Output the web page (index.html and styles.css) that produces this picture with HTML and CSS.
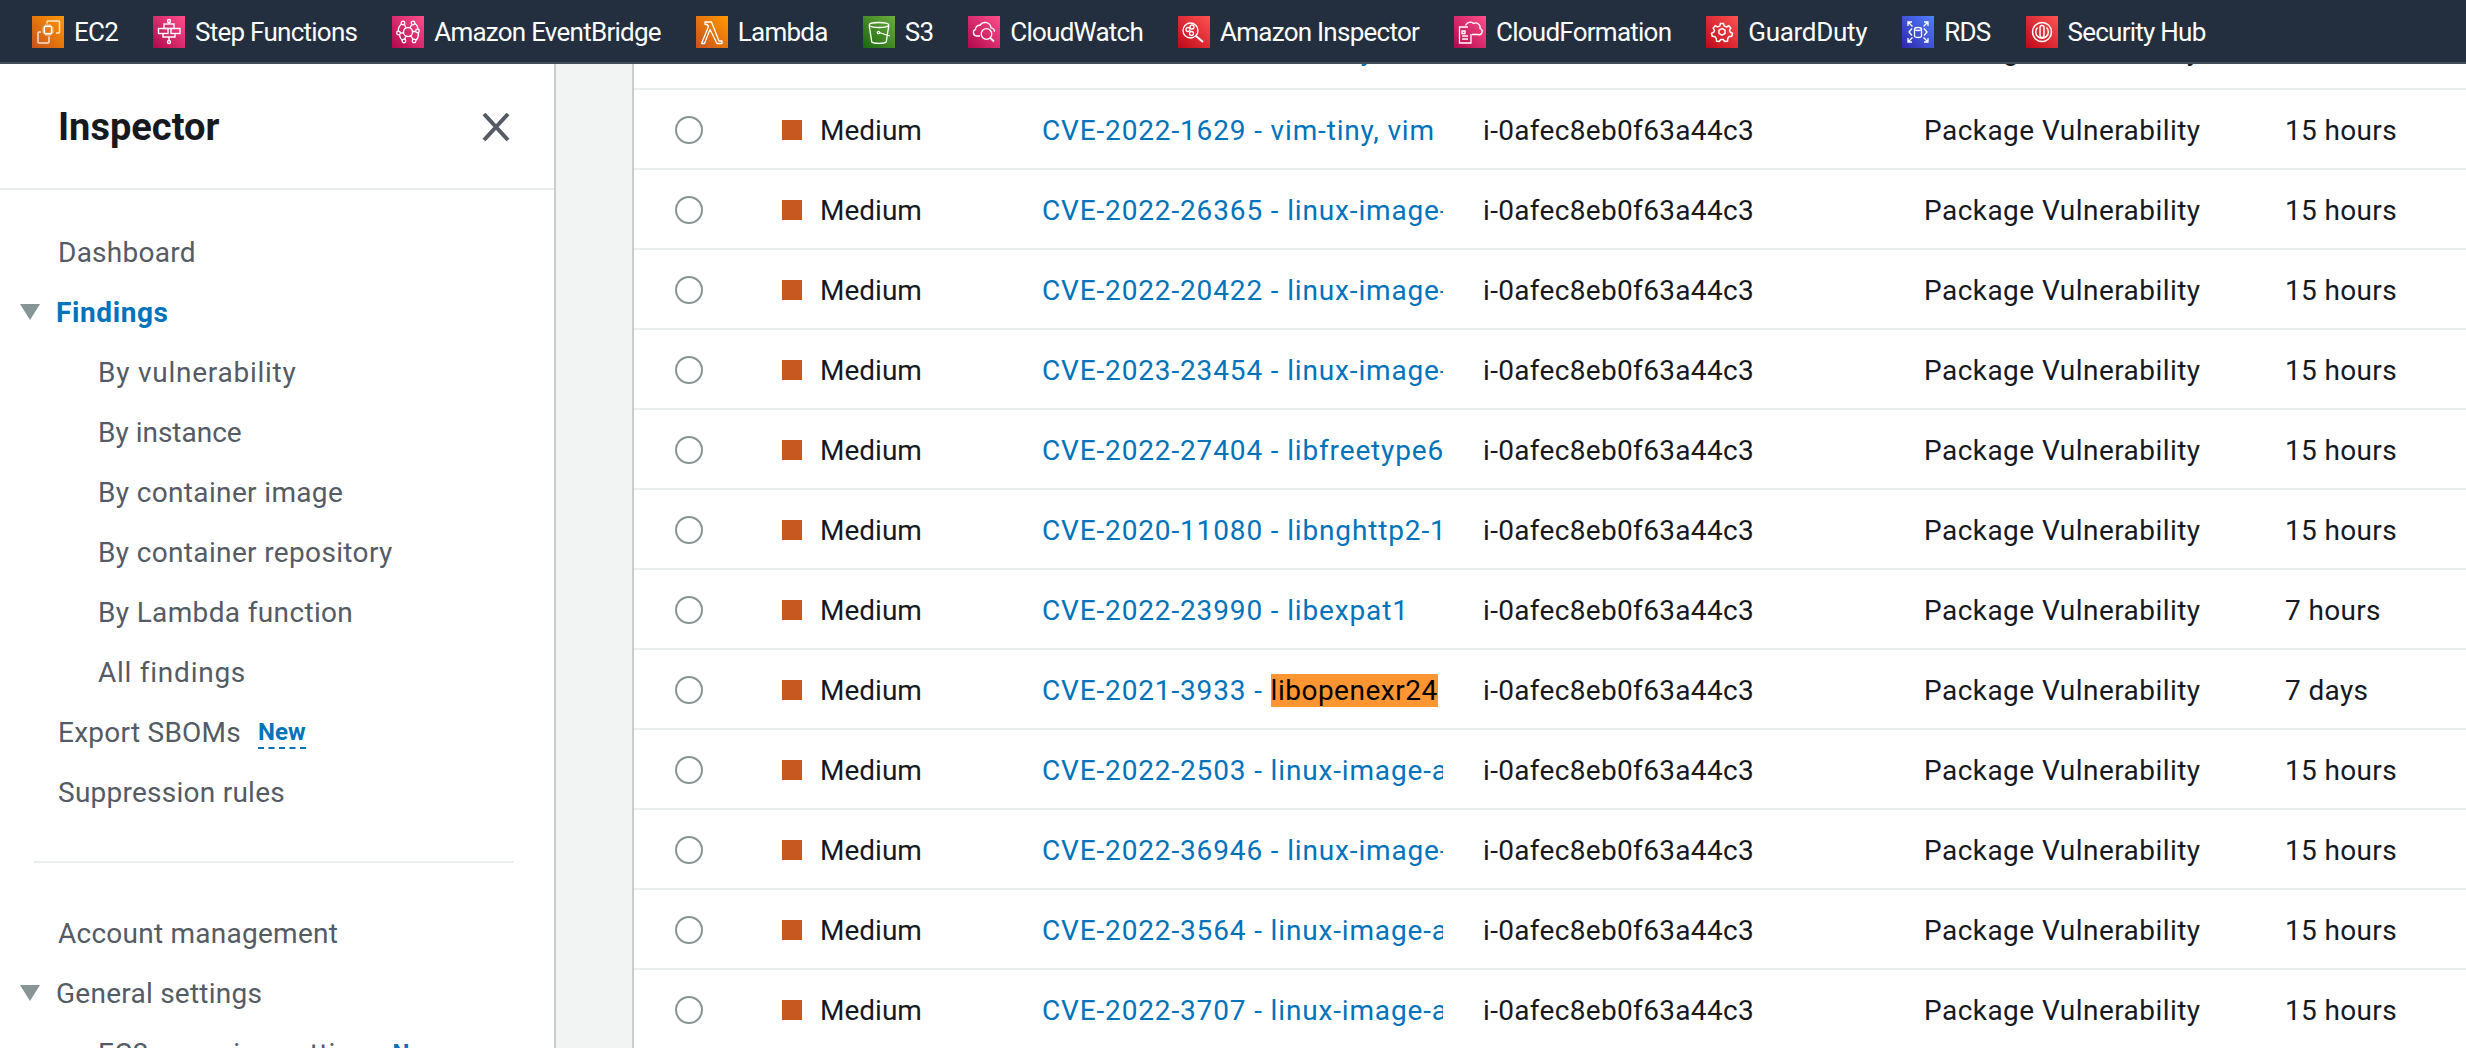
FILE: index.html
```html
<!DOCTYPE html>
<html lang="en">
<head>
<meta charset="utf-8">
<title>Inspector findings</title>
<link rel="stylesheet" href="styles.css">
</head>
<body>
<header class="topbar">
  <a class="svc"><svg class="ico"><defs><linearGradient id="go" x1="0" y1="1" x2="1" y2="0"><stop offset="0" stop-color="#c8511b"/><stop offset="1" stop-color="#ff9900"/></linearGradient></defs><rect width="32" height="32" fill="url(#go)"/><g fill="none" stroke="#fff" stroke-width="1.2"><rect x="12.500" y="10.500" width="7" height="7" stroke-width="1.400"/><path d="M14 8.500v2M16 8.500v2M18 8.500v2M14 17.500v2M16 17.500v2M18 17.500v2M10.500 12h2M10.500 14h2M10.500 16h2M19.500 12h2M19.500 14h2M19.500 16h2"/><path d="M15 7.500V6q0-1 1-1h10.500q1 0 1 1v10q0 1-1 1H24M17 20.500V26q0 1-1 1H7q-1 0-1-1V17q0-1 1-1h2" stroke-opacity=".8" stroke-width="1.500"/></g></svg><span class="svc-name">EC2</span></a>
  <a class="svc"><svg class="ico"><defs><linearGradient id="gp" x1="0" y1="1" x2="1" y2="0"><stop offset="0" stop-color="#b0084d"/><stop offset="1" stop-color="#ff4f8b"/></linearGradient></defs><rect width="32" height="32" fill="url(#gp)"/><g fill="none" stroke="#fff" stroke-width="1.400"><circle cx="16" cy="5" r="1.500"/><path d="M16 6.500V8M16 21v3.500"/><rect x="11" y="8" width="10" height="4.500"/><rect x="5.500" y="12.500" width="9.500" height="5"/><rect x="18" y="12.500" width="9" height="5"/><path d="M10 17.500V21h12v-3.500"/><circle cx="16" cy="26" r="1.500"/></g></svg><span class="svc-name">Step Functions</span></a>
  <a class="svc"><svg class="ico"><rect width="32" height="32" fill="url(#gp)"/><g fill="none" stroke="#fff" stroke-width="1.300"><circle cx="16" cy="16" r="4.500"/><circle cx="11" cy="7" r="1.800"/><circle cx="21" cy="7" r="1.800"/><circle cx="6.500" cy="17" r="1.800"/><circle cx="25.500" cy="15" r="1.800"/><circle cx="12" cy="25" r="1.800"/><circle cx="22" cy="25" r="1.800"/><path d="M12.500 8.500l1.500 3.500M19.800 8.500L18 12M8.300 17h3.200M20.500 15.500h3.200M12.800 23.200l1-3M21 23.200l-2.500-3.500M9.500 8Q6 11 6.300 15.200M22.800 7.500Q26 9.500 25.800 13.200M7.500 18.800Q8 22.500 10.300 24.500M24 24.500q2.500-2.500 2.500-7.500"/></g></svg><span class="svc-name">Amazon EventBridge</span></a>
  <a class="svc"><svg class="ico"><rect width="32" height="32" fill="url(#go)"/><path d="M9 6h6.500l7.500 19h3v2.500h-5L14 13.500 8.500 27.500H5.500l7-17L11 8.500H9z" fill="none" stroke="#fff" stroke-width="1.300" stroke-linejoin="round"/></svg><span class="svc-name">Lambda</span></a>
  <a class="svc"><svg class="ico"><defs><linearGradient id="gg" x1="0" y1="1" x2="1" y2="0"><stop offset="0" stop-color="#1b660f"/><stop offset="1" stop-color="#6cae3e"/></linearGradient></defs><rect width="32" height="32" fill="url(#gg)"/><g fill="none" stroke="#fff" stroke-width="1.300"><ellipse cx="16" cy="9" rx="9.800" ry="2.500"/><path d="M6.200 9.500l2.600 16.500c.4 1.700 14 1.700 14.400 0l2.600-16.500M16 16.500l11 3.500"/><circle cx="15.500" cy="16.500" r="1.200"/></g></svg><span class="svc-name">S3</span></a>
  <a class="svc"><svg class="ico"><rect width="32" height="32" fill="url(#gp)"/><g fill="none" stroke="#fff" stroke-width="1.300"><path d="M12 20H9a3.500 3.500 0 0 1-1.500-6.700 4 4 0 0 1 4.500-4 6 6 0 0 1 11 2.500 4 4 0 0 1 3.500 4"/><circle cx="18.500" cy="18" r="5.300"/><path d="M22.300 21.800l3.700 3.700" stroke-width="1.800"/></g></svg><span class="svc-name">CloudWatch</span></a>
  <a class="svc"><svg class="ico"><defs><linearGradient id="gr" x1="0" y1="1" x2="1" y2="0"><stop offset="0" stop-color="#bd0816"/><stop offset="1" stop-color="#ff5252"/></linearGradient></defs><rect width="32" height="32" fill="url(#gr)"/><g fill="none" stroke="#fff" stroke-width="1.300"><circle cx="12.500" cy="14.500" r="7.500"/><circle cx="14" cy="11" r="2"/><circle cx="10" cy="13.500" r="2"/><circle cx="13.500" cy="17.500" r="2"/><path d="M18 20l7 6" stroke-width="2"/></g></svg><span class="svc-name">Amazon Inspector</span></a>
  <a class="svc"><svg class="ico"><rect width="32" height="32" fill="url(#gp)"/><g fill="none" stroke="#fff" stroke-width="1.300"><path d="M14 11H5.500v16H17V18"/><path d="M8 15h3v2.500H8zM8 20h6M8 23h6"/><path d="M11.500 9.500a5 5 0 0 1 8-2 4.500 4.500 0 0 1 6.500 5 3 3 0 0 1-2 6h-6"/></g></svg><span class="svc-name">CloudFormation</span></a>
  <a class="svc"><svg class="ico"><rect width="32" height="32" fill="url(#gr)"/><g fill="none" stroke="#fff" stroke-width="1.500"><path d="M14.500 7.500h3l.7 2.500 2.300 1 2.300-1.200 2 2.300-1.300 2.400.8 1.800 2.200 1-.8 3-2.500.2-1.500 2-.2 2.500-2.800.5-1.500-2h-2.400l-1.500 2-2.800-.5-.2-2.500-1.500-2-2.500-.2-.8-3 2.200-1 .8-1.800-1.300-2.400 2-2.300 2.300 1.200 2.300-1z"/><path d="M16 12.500l3 1.700v3.300L16 19.200l-3-1.700v-3.300z"/></g></svg><span class="svc-name">GuardDuty</span></a>
  <a class="svc"><svg class="ico"><defs><linearGradient id="gb" x1="0" y1="1" x2="1" y2="0"><stop offset="0" stop-color="#2e27ad"/><stop offset="1" stop-color="#527fff"/></linearGradient></defs><rect width="32" height="32" fill="url(#gb)"/><g fill="none" stroke="#fff" stroke-width="1.300"><ellipse cx="16" cy="13" rx="3.500" ry="1.500"/><path d="M12.500 13v7c0 2 7 2 7 0v-7M10 12.500l-3 3.500 3 3.500M22 12.500l3 3.500-3 3.500M6 10V6h4M6 6l4.500 4.500M26 10V6h-4M26 6l-4.500 4.500M6 22v4h4M6 26l4.500-4.500M26 22v4h-4M26 26l-4.500-4.500"/></g></svg><span class="svc-name">RDS</span></a>
  <a class="svc"><svg class="ico"><rect width="32" height="32" fill="url(#gr)"/><g fill="none" stroke="#fff" stroke-width="1.500"><circle cx="16" cy="16" r="9.500"/><path d="M11.500 11.500a6.300 6.300 0 1 0 9 0"/><rect x="14" y="9.500" width="4" height="12" rx="2"/></g></svg><span class="svc-name">Security Hub</span></a>
</header>
<div class="shell">
  <nav class="side">
    <div class="side-head">
      <h2 class="side-title">Inspector</h2>
      <svg class="close" viewBox="0 0 28 28"><path d="M2 1l24 26M26 1L2 27"/></svg>
    </div>
    <ul class="menu">
      <li class="item">Dashboard</li>
      <li class="item group active"><i class="tri"></i>Findings</li>
      <li class="item sub wide">By vulnerability</li>
      <li class="item sub tight">By instance</li>
      <li class="item sub">By container image</li>
      <li class="item sub">By container repository</li>
      <li class="item sub">By Lambda function</li>
      <li class="item sub wide">All findings</li>
      <li class="item">Export SBOMs<span class="new">New</span></li>
      <li class="item">Suppression rules</li>
    </ul>
    <hr class="side-rule">
    <ul class="menu">
      <li class="item">Account management</li>
      <li class="item group"><i class="tri"></i>General settings</li>
      <li class="item sub">EC2 scanning settings<span class="new">New</span></li>
    </ul>
  </nav>
  <div class="gutter"></div>
  <main class="panel">
    <div class="rows">
      <div class="row"><span class="c-radio"><i class="radio"></i></span><span class="c-sev"><i class="sq"></i>Medium</span><a class="c-title">CVE-2022-1621 - vim-tiny, vim</a><span class="c-inst">i-0afec8eb0f63a44c3</span><span class="c-type">Package Vulnerability</span><span class="c-age">15 hours</span></div>
      <div class="row"><span class="c-radio"><i class="radio"></i></span><span class="c-sev"><i class="sq"></i>Medium</span><a class="c-title">CVE-2022-1629 - vim-tiny, vim</a><span class="c-inst">i-0afec8eb0f63a44c3</span><span class="c-type">Package Vulnerability</span><span class="c-age">15 hours</span></div>
      <div class="row"><span class="c-radio"><i class="radio"></i></span><span class="c-sev"><i class="sq"></i>Medium</span><a class="c-title">CVE-2022-26365 - linux-image-aws</a><span class="c-inst">i-0afec8eb0f63a44c3</span><span class="c-type">Package Vulnerability</span><span class="c-age">15 hours</span></div>
      <div class="row"><span class="c-radio"><i class="radio"></i></span><span class="c-sev"><i class="sq"></i>Medium</span><a class="c-title">CVE-2022-20422 - linux-image-aws</a><span class="c-inst">i-0afec8eb0f63a44c3</span><span class="c-type">Package Vulnerability</span><span class="c-age">15 hours</span></div>
      <div class="row"><span class="c-radio"><i class="radio"></i></span><span class="c-sev"><i class="sq"></i>Medium</span><a class="c-title">CVE-2023-23454 - linux-image-aws</a><span class="c-inst">i-0afec8eb0f63a44c3</span><span class="c-type">Package Vulnerability</span><span class="c-age">15 hours</span></div>
      <div class="row"><span class="c-radio"><i class="radio"></i></span><span class="c-sev"><i class="sq"></i>Medium</span><a class="c-title">CVE-2022-27404 - libfreetype6</a><span class="c-inst">i-0afec8eb0f63a44c3</span><span class="c-type">Package Vulnerability</span><span class="c-age">15 hours</span></div>
      <div class="row"><span class="c-radio"><i class="radio"></i></span><span class="c-sev"><i class="sq"></i>Medium</span><a class="c-title">CVE-2020-11080 - libnghttp2-14</a><span class="c-inst">i-0afec8eb0f63a44c3</span><span class="c-type">Package Vulnerability</span><span class="c-age">15 hours</span></div>
      <div class="row"><span class="c-radio"><i class="radio"></i></span><span class="c-sev"><i class="sq"></i>Medium</span><a class="c-title">CVE-2022-23990 - libexpat1</a><span class="c-inst">i-0afec8eb0f63a44c3</span><span class="c-type">Package Vulnerability</span><span class="c-age">7 hours</span></div>
      <div class="row"><span class="c-radio"><i class="radio"></i></span><span class="c-sev"><i class="sq"></i>Medium</span><a class="c-title">CVE-2021-3933 - <mark class="hit">libopenexr24</mark></a><span class="c-inst">i-0afec8eb0f63a44c3</span><span class="c-type">Package Vulnerability</span><span class="c-age">7 days</span></div>
      <div class="row"><span class="c-radio"><i class="radio"></i></span><span class="c-sev"><i class="sq"></i>Medium</span><a class="c-title">CVE-2022-2503 - linux-image-aws</a><span class="c-inst">i-0afec8eb0f63a44c3</span><span class="c-type">Package Vulnerability</span><span class="c-age">15 hours</span></div>
      <div class="row"><span class="c-radio"><i class="radio"></i></span><span class="c-sev"><i class="sq"></i>Medium</span><a class="c-title">CVE-2022-36946 - linux-image-aws</a><span class="c-inst">i-0afec8eb0f63a44c3</span><span class="c-type">Package Vulnerability</span><span class="c-age">15 hours</span></div>
      <div class="row"><span class="c-radio"><i class="radio"></i></span><span class="c-sev"><i class="sq"></i>Medium</span><a class="c-title">CVE-2022-3564 - linux-image-aws</a><span class="c-inst">i-0afec8eb0f63a44c3</span><span class="c-type">Package Vulnerability</span><span class="c-age">15 hours</span></div>
      <div class="row"><span class="c-radio"><i class="radio"></i></span><span class="c-sev"><i class="sq"></i>Medium</span><a class="c-title">CVE-2022-3707 - linux-image-aws</a><span class="c-inst">i-0afec8eb0f63a44c3</span><span class="c-type">Package Vulnerability</span><span class="c-age">15 hours</span></div>
    </div>
  </main>
</div>
```

FILE: styles.css
```css
* { box-sizing: border-box; }
html, body { margin: 0; height: 100%; overflow: hidden; }
body {
  width: 2466px;
  height: 1048px;
  display: flex;
  flex-direction: column;
  font-family: Roboto, "Liberation Sans", sans-serif;
  font-size: 28px;
  background: #fff;
  color: #16191f;
}
.topbar {
  position: relative;
  z-index: 2;
  flex: 0 0 64px;
  display: flex;
  align-items: center;
  gap: 35px;
  padding: 2px 0 0 32px;
  background: #232f3e;
  border-bottom: 2px solid #434d5a;
}
.svc { display: flex; align-items: center; gap: 10px; color: #fff; font-size: 26px; letter-spacing: -0.75px; white-space: nowrap; }
.svc:nth-child(9) { letter-spacing: -0.3px; }
.ico { width: 32px; height: 32px; flex: none; display: block; }
.shell { flex: 1; min-height: 0; display: flex; }
.side {
  flex: 0 0 556px;
  overflow: hidden;
  background: #fff;
  border-right: 2px solid #c9cdcd;
}
.side-head {
  height: 126px;
  display: flex;
  align-items: center;
  justify-content: space-between;
  padding: 2px 44px 0 58px;
  border-bottom: 2px solid #eaeded;
}
.side-title { margin: 0; font-size: 38px; font-weight: 700; color: #16191f; }
.close { width: 28px; height: 28px; fill: none; stroke: #545b64; stroke-width: 4; }
.menu { list-style: none; margin: 0; padding: 0; }
.side-head + .menu { margin-top: 32px; }
.item {
  height: 60px;
  display: flex;
  align-items: center;
  padding-left: 58px;
  color: #545b64;
  letter-spacing: 0.25px;
}
.group { padding-left: 20px; gap: 16px; }
.active { color: #0073bb; font-weight: 700; letter-spacing: 0.6px; }
.sub { padding-left: 98px; letter-spacing: 0.35px; }
.wide { letter-spacing: 0.75px; }
.tight { letter-spacing: 0; }
.tri {
  width: 20px;
  height: 16px;
  background: #879596;
  clip-path: polygon(0 0, 100% 0, 50% 100%);
}
.new {
  margin: 2px 0 0 17px;
  font-size: 24px;
  font-weight: 700;
  color: #0073bb;
  line-height: 30px;
  letter-spacing: 0;
  border-bottom: 2px dashed #0073bb;
}
.sub .new { margin-left: 10px; }
.side-rule { margin: 39px 40px 40px 34px; border: 0; border-top: 2px solid #eaeded; }
.gutter { flex: 0 0 76px; background: #f2f3f3; }
.panel {
  flex: 1;
  min-width: 0;
  overflow: hidden;
  border-left: 2px solid #c9cdcd;
}
.rows { margin-top: -54px; }
.row {
  height: 80px;
  padding-top: 2px;
  display: flex;
  align-items: center;
  border-bottom: 2px solid #eaeded;
}
.c-radio { flex: 0 0 148px; padding-left: 41px; display: flex; }
.radio { width: 28px; height: 28px; border: 2px solid #879596; border-radius: 50%; background: #fff; }
.c-sev { flex: 0 0 260px; display: flex; align-items: center; gap: 18px; }
.sq { width: 20px; height: 20px; background: #c7581f; }
.c-title { flex: 0 0 401px; margin-right: 40px; overflow: hidden; white-space: nowrap; color: #0073bb; letter-spacing: 0.85px; }
.hit { background: #ff9632; color: #000; letter-spacing: 0.5px; }
.c-inst { flex: 0 0 441px; letter-spacing: 0.33px; }
.c-type { flex: 0 0 361px; letter-spacing: 0.45px; }
.c-age { flex: none; letter-spacing: 0.35px; }
```
